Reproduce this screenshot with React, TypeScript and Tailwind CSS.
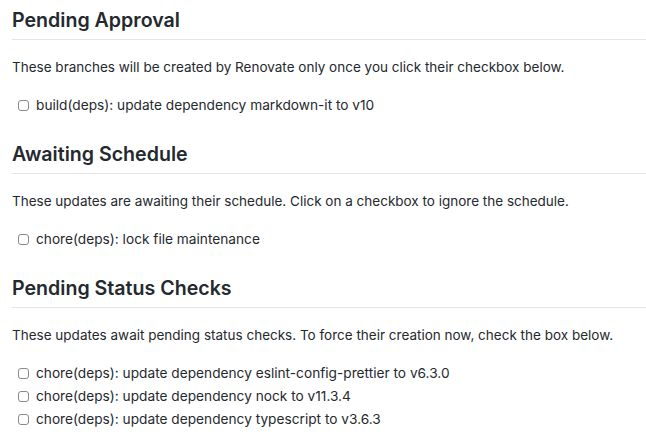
const sections = [
  {
    title: "Pending Approval",
    note: "These branches will be created by Renovate only once you click their checkbox below.",
    items: ["build(deps): update dependency markdown-it to v10"],
  },
  {
    title: "Awaiting Schedule",
    note: "These updates are awaiting their schedule. Click on a checkbox to ignore the schedule.",
    items: ["chore(deps): lock file maintenance"],
  },
  {
    title: "Pending Status Checks",
    note: "These updates await pending status checks. To force their creation now, check the box below.",
    items: [
      "chore(deps): update dependency eslint-config-prettier to v6.3.0",
      "chore(deps): update dependency nock to v11.3.4",
      "chore(deps): update dependency typescript to v3.6.3",
    ],
  },
]

export default function App() {
  return (
    <div className="min-h-screen bg-white pl-3 pt-[7px] text-[#24292e] font-['Inter','Liberation_Sans',sans-serif]">
      {sections.map((s, i) => (
        <section key={i} className={i > 0 ? "mt-[25px]" : ""}>
          <h2 className="border-b border-[#e5e5e5] pb-[6px] text-[19.6px] font-semibold leading-[26px]">
            {s.title}
          </h2>
          <p className="mt-[17px] text-[13.5px] leading-[21px]">{s.note}</p>
          <ul className="mt-[17px] flex flex-col gap-[2px]">
            {s.items.map((item, j) => (
              <li key={j} className="flex items-center text-[13.7px] leading-[21px]">
                <span className="ml-[6px] mr-[7px] h-[11px] w-[11px] rounded-[3px] border border-[#8a8a8a] bg-white" />
                {item}
              </li>
            ))}
          </ul>
        </section>
      ))}
    </div>
  )
}
